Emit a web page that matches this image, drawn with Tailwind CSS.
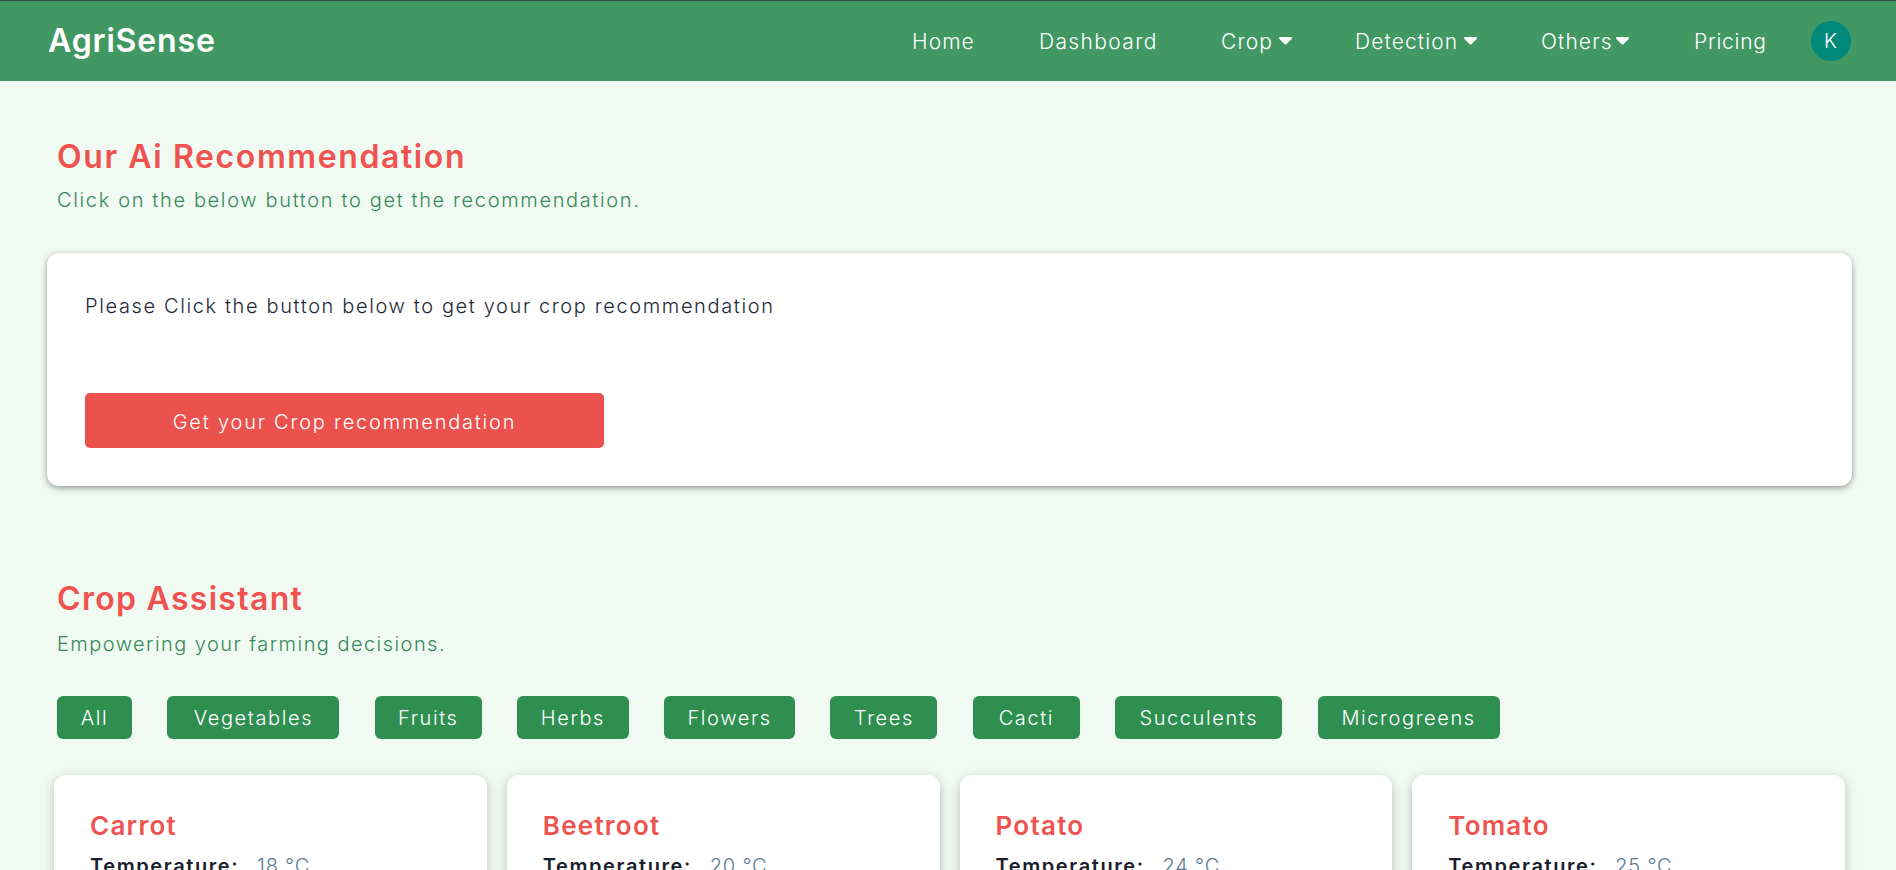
<!DOCTYPE html>
<html lang="en">
<head>
<meta charset="utf-8">
<title>AgriSense</title>
<script src="https://cdn.jsdelivr.net/npm/@tailwindcss/browser@4"></script>
</head>
<body class="h-screen overflow-hidden bg-[#f0faf2] font-['Inter','Noto_Sans',sans-serif]">
<nav class="h-[81px] border-t border-[#3d4a44] bg-[#419862] flex items-center justify-between pl-[48px] pr-[45px] text-white">
  <a class="text-[32px] leading-none font-semibold tracking-[0.85px]">AgriSense</a>
  <div class="flex items-center text-[21px] leading-none font-light tracking-[1.1px]">
    <a class="w-[63px] whitespace-nowrap">Home</a>
    <a class="ml-[64px] w-[118px] whitespace-nowrap tracking-[1.35px]">Dashboard</a>
    <a class="ml-[64px] w-[71px] flex items-center justify-between whitespace-nowrap">Crop
      <svg class="w-[13px] h-[8px]" viewBox="0 0 13 8"><path d="M1.2 0h10.6c1 0 1.5 1.2.8 1.9L7.3 7.3c-.4.4-1.2.4-1.6 0L.4 1.9C-.3 1.2.2 0 1.2 0z" fill="#fff"/></svg>
    </a>
    <a class="ml-[63px] w-[122px] flex items-center justify-between whitespace-nowrap">Detection
      <svg class="w-[13px] h-[8px]" viewBox="0 0 13 8"><path d="M1.2 0h10.6c1 0 1.5 1.2.8 1.9L7.3 7.3c-.4.4-1.2.4-1.6 0L.4 1.9C-.3 1.2.2 0 1.2 0z" fill="#fff"/></svg>
    </a>
    <a class="ml-[64px] w-[88px] flex items-center justify-between whitespace-nowrap">Others
      <svg class="w-[13px] h-[8px]" viewBox="0 0 13 8"><path d="M1.2 0h10.6c1 0 1.5 1.2.8 1.9L7.3 7.3c-.4.4-1.2.4-1.6 0L.4 1.9C-.3 1.2.2 0 1.2 0z" fill="#fff"/></svg>
    </a>
    <a class="ml-[65px] w-[70px] whitespace-nowrap tracking-[0.75px]">Pricing</a>
    <span class="ml-[47px] w-10 h-10 rounded-full bg-[#00897b] flex items-center justify-center text-[20px]">K</span>
  </div>
</nav>

<main class="pl-[47px] pr-[44px]">
  <section class="pt-[54px]">
    <div class="pl-[10px]">
      <h1 class="text-[32px] leading-[44px] font-semibold text-[#ef5350] tracking-[1.6px]">Our Ai Recommendation</h1>
      <p class="mt-[8px] text-[20px] leading-[26px] font-light text-[#37895a] tracking-[1.65px]">Click on the below button to get the recommendation.</p>
    </div>
    <div class="mt-[40px] h-[233px] bg-white rounded-[12px] shadow-[0_2px_6px_rgba(0,0,0,0.4)] px-[38px] pt-[39px]">
      <p class="text-[20px] leading-[28px] font-light text-[#1f2937] tracking-[1.63px]">Please Click the button below to get your crop recommendation</p>
      <button class="mt-[73px] w-[519px] h-[55px] pt-[2px] bg-[#ec524d] rounded-[5px] text-white text-[20px] font-light tracking-[1.8px]">Get your Crop recommendation</button>
    </div>
  </section>

  <section class="pt-[95px]">
    <div class="pl-[10px]">
      <h2 class="text-[32px] leading-[36px] font-semibold text-[#ef5350] tracking-[1.3px]">Crop Assistant</h2>
      <p class="mt-[14px] text-[20px] leading-[26px] font-light text-[#37895a] tracking-[1.45px]">Empowering your farming decisions.</p>
      <div class="mt-[39px] flex gap-[35.4px] text-white text-[20px] font-light tracking-[1.6px]">
        <button class="w-[75px] h-[43px] pt-[1px] bg-[#2f8f51] rounded-[6px]">All</button>
        <button class="w-[172px] h-[43px] pt-[1px] bg-[#2f8f51] rounded-[6px]">Vegetables</button>
        <button class="w-[107px] h-[43px] pt-[1px] bg-[#2f8f51] rounded-[6px]">Fruits</button>
        <button class="w-[111.5px] h-[43px] pt-[1px] bg-[#2f8f51] rounded-[6px]">Herbs</button>
        <button class="w-[131px] h-[43px] pt-[1px] bg-[#2f8f51] rounded-[6px]">Flowers</button>
        <button class="w-[107px] h-[43px] pt-[1px] bg-[#2f8f51] rounded-[6px]">Trees</button>
        <button class="w-[107px] h-[43px] pt-[1px] bg-[#2f8f51] rounded-[6px]">Cacti</button>
        <button class="w-[167px] h-[43px] pt-[1px] bg-[#2f8f51] rounded-[6px]">Succulents</button>
        <button class="w-[182px] h-[43px] pt-[1px] bg-[#2f8f51] rounded-[6px]">Microgreens</button>
      </div>
    </div>
    <div class="mt-[36px] mx-[7px] grid grid-cols-4 gap-[20px]">
      <article class="h-[200px] bg-white rounded-[12px] shadow-[0_3px_12px_rgba(0,30,15,0.24)] pl-[36px] pt-[33px]">
        <h3 class="text-[26px] leading-[36px] font-semibold text-[#ef5350] tracking-[1.25px]">Carrot</h3>
        <p class="mt-[8px] text-[20px] leading-[28px] flex"><span class="w-[167px] font-semibold text-[#1a202c] tracking-[1.6px]">Temperature:</span><span class="font-light text-[#5a7a94] tracking-[0.8px]">18 °C</span></p>
      </article>
      <article class="h-[200px] bg-white rounded-[12px] shadow-[0_3px_12px_rgba(0,30,15,0.24)] pl-[36px] pt-[33px]">
        <h3 class="text-[26px] leading-[36px] font-semibold text-[#ef5350] tracking-[1.25px]">Beetroot</h3>
        <p class="mt-[8px] text-[20px] leading-[28px] flex"><span class="w-[167px] font-semibold text-[#1a202c] tracking-[1.6px]">Temperature:</span><span class="font-light text-[#5a7a94] tracking-[0.8px]">20 °C</span></p>
      </article>
      <article class="h-[200px] bg-white rounded-[12px] shadow-[0_3px_12px_rgba(0,30,15,0.24)] pl-[36px] pt-[33px]">
        <h3 class="text-[26px] leading-[36px] font-semibold text-[#ef5350] tracking-[1.25px]">Potato</h3>
        <p class="mt-[8px] text-[20px] leading-[28px] flex"><span class="w-[167px] font-semibold text-[#1a202c] tracking-[1.6px]">Temperature:</span><span class="font-light text-[#5a7a94] tracking-[0.8px]">24 °C</span></p>
      </article>
      <article class="h-[200px] bg-white rounded-[12px] shadow-[0_3px_12px_rgba(0,30,15,0.24)] pl-[36px] pt-[33px]">
        <h3 class="text-[26px] leading-[36px] font-semibold text-[#ef5350] tracking-[1.25px]">Tomato</h3>
        <p class="mt-[8px] text-[20px] leading-[28px] flex"><span class="w-[167px] font-semibold text-[#1a202c] tracking-[1.6px]">Temperature:</span><span class="font-light text-[#5a7a94] tracking-[0.8px]">25 °C</span></p>
      </article>
    </div>
  </section>
</main>
</body>
</html>
